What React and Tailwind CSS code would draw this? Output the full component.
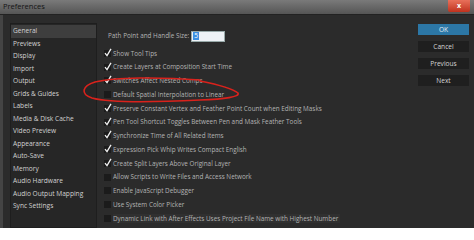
import React from "react";

const nav = [
  "General",
  "Previews",
  "Display",
  "Import",
  "Output",
  "Grids & Guides",
  "Labels",
  "Media & Disk Cache",
  "Video Preview",
  "Appearance",
  "Auto-Save",
  "Memory",
  "Audio Hardware",
  "Audio Output Mapping",
  "Sync Settings",
];

const opts = [
  ["Show Tool Tips", true],
  ["Create Layers at Composition Start Time", true],
  ["Switches Affect Nested Comps", true],
  ["Default Spatial Interpolation to Linear", false],
  ["Preserve Constant Vertex and Feather Point Count when Editing Masks", true],
  ["Pen Tool Shortcut Toggles Between Pen and Mask Feather Tools", true],
  ["Synchronize Time of All Related Items", true],
  ["Expression Pick Whip Writes Compact English", true],
  ["Create Split Layers Above Original Layer", true],
  ["Allow Scripts to Write Files and Access Network", false],
  ["Enable JavaScript Debugger", false],
  ["Use System Color Picker", false],
  ["Dynamic Link with After Effects Uses Project File Name with Highest Number", false, true],
  ["", false],
];

function Check({ on }) {
  return (
    <div className="w-[7px] h-[7px] bg-[#1b1b1b] relative shrink-0">
      {on && (
        <svg className="absolute left-[0px] top-[-2px]" width="8" height="9" viewBox="0 0 8 9">
          <path d="M1 5.2 L3 7.6 L7 0.8" fill="none" stroke="#f2f2f2" strokeWidth="1.3" />
        </svg>
      )}
    </div>
  );
}

export default function App() {
  return (
    <div
      className="w-[474px] h-[228px] bg-[#2b2b2b] relative overflow-hidden flex flex-col"
      style={{ fontFamily: '"Open Sans", "DejaVu Sans", sans-serif' }}
    >
      <div className="h-[15px] shrink-0 bg-gradient-to-b from-[#7a7a7a] to-[#555555] border-b border-[#222] flex items-center pl-[3px] text-[7.5px] text-[#141414] relative">
        Preferences
        <div className="absolute right-[4px] top-0 w-[22px] h-[12px] bg-gradient-to-b from-[#e8705a] to-[#c0301c] flex items-center justify-center text-white text-[7px] font-bold rounded-b-[2px]">
          x
        </div>
      </div>
      <div className="flex-1 flex border-l-[3px] border-[#444] min-h-0">
        <div className="ml-[7px] mt-[8px] w-[87px] bg-[#262626] border border-[#1e1e1e] pt-[1px] shrink-0">
          {nav.map((n, i) => (
            <div
              key={n}
              className={
                "h-[12.5px] flex items-center pl-[2px] text-[6.6px] text-[#d2d2d2] whitespace-nowrap " +
                (i === 0 ? "bg-[#3e3e3e]" : "")
              }
            >
              {n}
            </div>
          ))}
        </div>
        <div className="flex-1 pl-[7px] pt-[15px] min-w-0">
          <div className="h-[12px] flex items-center pl-[4px] text-[6.35px] text-[#b4b4b4] gap-[2px]">
            <span>Path Point and Handle Size:</span>
            <div className="w-[34px] h-[11px] bg-[#eef2f6] border border-[#9aa] flex items-center pl-[1px]">
              <span className="bg-[#3d8fe0] text-white text-[6.6px] leading-[8px] px-[1px]">5</span>
            </div>
          </div>
          <div className="mt-[4.5px]">
            {opts.map(([t, on, hl], i) => (
              <div key={i} className="h-[13.75px] flex items-center gap-[2px] whitespace-nowrap">
                <Check on={on} />
                <span
                  className={
                    "text-[6.35px] text-[#b4b4b4] pr-[2px] " + (hl ? "bg-[#303030]" : "")
                  }
                >
                  {t}
                </span>
              </div>
            ))}
          </div>
        </div>
        <div className="w-[51px] mr-[5px] mt-[9px] flex flex-col gap-[6px] shrink-0">
          <div className="h-[11px] bg-[#2c77a6] flex items-center justify-center text-[6.6px] text-[#e6eef4]">OK</div>
          <div className="h-[11px] bg-[#1f1f1f] flex items-center justify-center text-[6.6px] text-[#d4d4d4]">Cancel</div>
          <div className="h-[11px] bg-[#1f1f1f] flex items-center justify-center text-[6.6px] text-[#d4d4d4]">Previous</div>
          <div className="h-[11px] bg-[#1f1f1f] flex items-center justify-center text-[6.6px] text-[#d4d4d4]">Next</div>
        </div>
      </div>
      <svg className="absolute inset-0 pointer-events-none" width="474" height="228" viewBox="0 0 474 228">
        <path
          d="M200 81 C215 84 232 88 238 93 C240 97 225 99 200 100 C160 102 110 103 92 98 C80 94 82 86 95 82 C115 77 160 77 200 80"
          fill="none"
          stroke="#d9221c"
          strokeWidth="1.6"
          strokeLinecap="round"
        />
      </svg>
    </div>
  );
}
